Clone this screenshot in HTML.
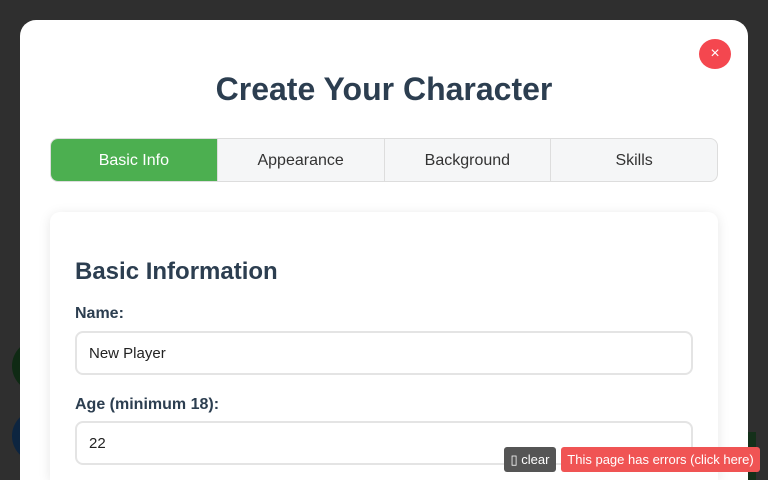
<!DOCTYPE html>
<html style="overflow:hidden;height:480px"><head><style>
body{margin:0;width:768px;height:480px;overflow:hidden;background:#2f2f2f;font-family:"Liberation Sans",sans-serif;position:relative}
.c1{position:absolute;left:12px;top:340px;width:52px;height:52px;border-radius:50%;background:#0f2a14}
.c2{position:absolute;left:12px;top:410px;width:52px;height:52px;border-radius:50%;background:#0d2540}
.c3{position:absolute;left:740px;top:432px;width:16px;height:48px;background:#14301a}
.modal{position:absolute;left:20px;top:20px;width:728px;height:460px;background:#fff;border-radius:16px 16px 0 0;overflow:hidden}
.x{position:absolute;left:679px;top:19px;width:32px;height:30px;border-radius:50%;background:#f4474f;color:#fff;text-align:center;line-height:30px;font-size:16px}
h1{position:absolute;left:0;width:728px;top:51px;margin:0;text-align:center;font-size:32px;color:#2c3e50;font-weight:bold}
.tabs{position:absolute;left:30px;top:118px;width:666px;height:42px;border:1px solid #ddd;border-radius:8px;overflow:hidden;display:flex;background:#f5f6f7}
.tabs div{flex:1;text-align:center;line-height:43px;font-size:16px;color:#333;border-left:1px solid #ddd}
.tabs div:first-child{background:#4caf50;color:#fff;border-left:none}
.card{position:absolute;left:30px;top:192px;width:668px;height:268px;background:#fff;border-radius:10px 10px 0 0;box-shadow:0 2px 12px rgba(0,0,0,.1)}
h2{position:absolute;left:25px;top:46px;margin:0;font-size:24px;color:#2c3e50}
.lbl{position:absolute;left:25px;font-size:16px;font-weight:bold;color:#2c3e50}
.in{position:absolute;left:25px;width:602px;height:40px;border:2px solid #e4e4e4;border-radius:8px;font-size:15px;line-height:42px;padding-left:12px;color:#222}
.clr{position:absolute;left:504px;top:447px;width:52px;height:25px;background:#555;border-radius:3px;color:#fff;font-size:13px;line-height:25px;text-align:center}
.err{position:absolute;left:561px;top:447px;width:199px;height:25px;background:#f05454;border-radius:3px;color:#fff;font-size:13px;line-height:25px;text-align:center}
</style></head><body>
<div class="c1"></div><div class="c2"></div><div class="c3"></div>
<div class="modal">
<div class="x">×</div>
<h1>Create Your Character</h1>
<div class="tabs"><div>Basic Info</div><div>Appearance</div><div>Background</div><div>Skills</div></div>
<div class="card">
<h2>Basic Information</h2>
<div class="lbl" style="top:93px">Name:</div>
<div class="in" style="top:119px">New Player</div>
<div class="lbl" style="top:184px">Age (minimum 18):</div>
<div class="in" style="top:209px">22</div>
</div>
</div>
<div class="clr">▯ clear</div>
<div class="err">This page has errors (click here)</div>
</body></html>
